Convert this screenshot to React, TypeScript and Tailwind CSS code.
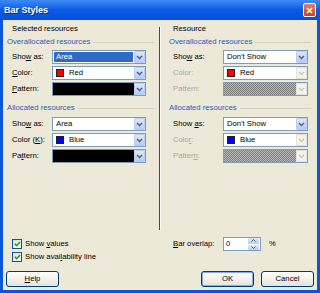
import React from "react";

type ComboContent =
  | { kind: "text"; text: string; selected?: boolean }
  | { kind: "swatch"; color: string; text: string }
  | { kind: "black" }
  | { kind: "checker" };

function Chevron({ disabled }: { disabled?: boolean }) {
  return (
    <svg width="7" height="5" viewBox="0 0 7 5">
      <path
        d="M1 1 L3.5 3.5 L6 1"
        fill="none"
        stroke={disabled ? "#c8c6b8" : "#4d6185"}
        strokeWidth="1.4"
      />
    </svg>
  );
}

function Combo({
  width,
  content,
  disabled,
}: {
  width: string;
  content: ComboContent;
  disabled?: boolean;
}) {
  return (
    <div className={`${width} flex h-[14px] border border-[#7f9db9] bg-white`}>
      <div className="flex min-w-0 flex-1 p-[1px]">
        {content.kind === "text" && (
          <div
            className={`flex flex-1 items-center pl-[2px] ${
              content.selected ? "bg-[#316ac5] text-white" : "text-black"
            }`}
          >
            {content.text}
          </div>
        )}
        {content.kind === "swatch" && (
          <div className="flex flex-1 items-center">
            <div
              className="ml-[2px] h-[8px] w-[8px] border border-[#202020]"
              style={{ backgroundColor: content.color }}
            />
            <span className="ml-[5px]">{content.text}</span>
          </div>
        )}
        {content.kind === "black" && <div className="-m-[1px] flex-1 bg-black" />}
        {content.kind === "checker" && (
          <div className="-m-[1px] flex-1 bg-[repeating-conic-gradient(#7c7c7c_0%_25%,#b8b8b8_0%_50%)] bg-[length:2px_2px]" />
        )}
      </div>
      <div
        className={`flex w-[11px] items-center justify-center rounded-[1px] border ${
          disabled
            ? "border-[#e4e2d8] bg-[#f4f3ee]"
            : "border-[#b9cbf3] bg-linear-to-b from-[#dce7fd] to-[#b7cbf7]"
        }`}
      >
        <Chevron disabled={disabled} />
      </div>
    </div>
  );
}

function Heading({ text, pr }: { text: string; pr: string }) {
  return (
    <div className={`mt-[3px] flex h-[10px] items-center gap-[3px] ${pr}`}>
      <span className="text-[#2a5cb8]">{text}</span>
      <div className="h-px flex-1 bg-[#d5d2c2]" />
    </div>
  );
}

function Row({
  label,
  labelWidth,
  comboWidth,
  content,
  disabled,
}: {
  label: React.ReactNode;
  labelWidth: string;
  comboWidth: string;
  content: ComboContent;
  disabled?: boolean;
}) {
  return (
    <div className="flex h-[14px] items-center">
      <div className={`${labelWidth} ${disabled ? "text-[#aca899]" : "text-black"}`}>{label}</div>
      <Combo width={comboWidth} content={content} disabled={disabled} />
    </div>
  );
}

function Check() {
  return (
    <div className="flex h-[10px] w-[10px] items-center justify-center border border-[#1c5180] bg-linear-to-br from-[#dcdcd7] to-white">
      <svg width="7" height="6" viewBox="0 0 7 6">
        <path d="M0.8 2.8 L2.6 4.6 L6.2 1" fill="none" stroke="#21a121" strokeWidth="1.5" />
      </svg>
    </div>
  );
}

function Button({ children, isDefault }: { children: React.ReactNode; isDefault?: boolean }) {
  return (
    <div
      className={`flex h-[16px] w-[53px] items-center justify-center rounded-[3px] border border-[#003c74] bg-linear-to-b from-white to-[#e6e3d6] ${
        isDefault ? "shadow-[inset_0_0_0_1px_#8aa8ee]" : ""
      }`}
    >
      {children}
    </div>
  );
}

export default function App() {
  return (
    <div className="flex h-[293px] w-[320px] flex-col font-['Liberation_Sans',Arial,sans-serif] text-[7.7px] leading-[10px] text-black">
      <div className="flex h-[20px] items-center justify-between bg-linear-to-b from-[#3d8bf5] via-[#0a5ae6] to-[#0a4fd6] pl-[4px] pr-[4px]">
        <span className="text-[9px] font-bold text-white [text-shadow:1px_1px_0_#0a2e8a]">
          Bar Styles
        </span>
        <div className="flex h-[14px] w-[13px] items-center justify-center rounded-[2px] border border-white bg-linear-to-b from-[#e8805c] to-[#c9401c]">
          <svg width="7" height="7" viewBox="0 0 7 7">
            <path d="M1 1 L6 6 M6 1 L1 6" stroke="white" strokeWidth="1.6" />
          </svg>
        </div>
      </div>

      <div className="flex flex-1 flex-col border-x-[3px] border-b-[3px] border-[#0b55d9] bg-[#ece9d8]">
        <div className="mt-[4px] flex h-[206px]">
          <div className="flex w-[156px] flex-col">
            <div className="h-[10px] pl-[9px]">Selected resources</div>
            <div className="pl-[4px]">
              <Heading text="Overallocated resources" pr="pr-[4px]" />
            </div>
            <div className="mt-[3px] flex flex-col gap-[2px] pl-[9px]">
              <Row
                label={<>Sho<u>w</u> as:</>}
                labelWidth="w-[40px]"
                comboWidth="w-[94px]"
                content={{ kind: "text", text: "Area", selected: true }}
              />
              <Row
                label={<><u>C</u>olor:</>}
                labelWidth="w-[40px]"
                comboWidth="w-[94px]"
                content={{ kind: "swatch", color: "#ff0000", text: "Red" }}
              />
              <Row
                label={<><u>P</u>attern:</>}
                labelWidth="w-[40px]"
                comboWidth="w-[94px]"
                content={{ kind: "black" }}
              />
            </div>
            <div className="mt-[4px] pl-[4px]">
              <Heading text="Allocated resources" pr="pr-[4px]" />
            </div>
            <div className="mt-[4px] flex flex-col gap-[2px] pl-[9px]">
              <Row
                label={<>Sho<u>w</u> as:</>}
                labelWidth="w-[40px]"
                comboWidth="w-[94px]"
                content={{ kind: "text", text: "Area" }}
              />
              <Row
                label={<>Color (<u>K</u>):</>}
                labelWidth="w-[40px]"
                comboWidth="w-[94px]"
                content={{ kind: "swatch", color: "#0000ff", text: "Blue" }}
              />
              <Row
                label={<>Pa<u>t</u>tern:</>}
                labelWidth="w-[40px]"
                comboWidth="w-[94px]"
                content={{ kind: "black" }}
              />
            </div>
          </div>

          <div className="mt-[3px] flex w-[2px]">
            <div className="w-px bg-[#4a4a44]" />
            <div className="w-px bg-[#fbfaf5]" />
          </div>

          <div className="flex flex-1 flex-col">
            <div className="h-[10px] pl-[12px]">Resource</div>
            <div className="pl-[8px]">
              <Heading text="Overallocated resources" pr="pr-[6px]" />
            </div>
            <div className="mt-[3px] flex flex-col gap-[2px] pl-[12px]">
              <Row
                label={<>Sho<u>w</u> as:</>}
                labelWidth="w-[50px]"
                comboWidth="w-[85px]"
                content={{ kind: "text", text: "Don't Show" }}
              />
              <Row
                label="Color:"
                labelWidth="w-[50px]"
                comboWidth="w-[85px]"
                content={{ kind: "swatch", color: "#ff0000", text: "Red" }}
                disabled
              />
              <Row
                label="Pattern:"
                labelWidth="w-[50px]"
                comboWidth="w-[85px]"
                content={{ kind: "checker" }}
                disabled
              />
            </div>
            <div className="mt-[4px] pl-[8px]">
              <Heading text="Allocated resources" pr="pr-[6px]" />
            </div>
            <div className="mt-[4px] flex flex-col gap-[2px] pl-[12px]">
              <Row
                label={<>Show <u>a</u>s:</>}
                labelWidth="w-[50px]"
                comboWidth="w-[85px]"
                content={{ kind: "text", text: "Don't Show" }}
              />
              <Row
                label={<>Colo<u>r</u>:</>}
                labelWidth="w-[50px]"
                comboWidth="w-[85px]"
                content={{ kind: "swatch", color: "#0000ff", text: "Blue" }}
                disabled
              />
              <Row
                label={<>Patter<u>n</u>:</>}
                labelWidth="w-[50px]"
                comboWidth="w-[85px]"
                content={{ kind: "checker" }}
                disabled
              />
            </div>
          </div>
        </div>

        <div className="mt-[7px] flex">
          <div className="flex w-[158px] flex-col gap-[3px] pl-[9px] pt-[2px]">
            <div className="flex h-[10px] items-center gap-[3px]">
              <Check />
              <span>Show <u>v</u>alues</span>
            </div>
            <div className="flex h-[10px] items-center gap-[3px]">
              <Check />
              <span>Show avai<u>l</u>ability line</span>
            </div>
          </div>
          <div className="flex h-[14px] items-center pl-[12px]">
            <div className="w-[50px]"><u>B</u>ar overlap:</div>
            <div className="flex h-[14px] w-[38px] items-center border border-[#7f9db9] bg-white">
              <span className="flex-1 pl-[2px]">0</span>
              <div className="mr-[1px] flex h-[12px] w-[11px] flex-col gap-px">
                <div className="flex flex-1 items-center justify-center rounded-[1px] bg-linear-to-b from-[#dce7fd] to-[#b7cbf7]">
                  <svg width="5" height="3" viewBox="0 0 5 3">
                    <path d="M0.5 2.5 L2.5 0.5 L4.5 2.5" fill="none" stroke="#4d6185" strokeWidth="1" />
                  </svg>
                </div>
                <div className="flex flex-1 items-center justify-center rounded-[1px] bg-linear-to-b from-[#dce7fd] to-[#b7cbf7]">
                  <svg width="5" height="3" viewBox="0 0 5 3">
                    <path d="M0.5 0.5 L2.5 2.5 L4.5 0.5" fill="none" stroke="#4d6185" strokeWidth="1" />
                  </svg>
                </div>
              </div>
            </div>
            <span className="ml-[8px]">%</span>
          </div>
        </div>

        <div className="mt-[9px] flex items-center pl-[3px] pr-[3px]">
          <Button>
            <span><u>H</u>elp</span>
          </Button>
          <div className="ml-auto flex gap-[7px]">
            <Button isDefault>OK</Button>
            <Button>Cancel</Button>
          </div>
        </div>
      </div>
    </div>
  );
}
